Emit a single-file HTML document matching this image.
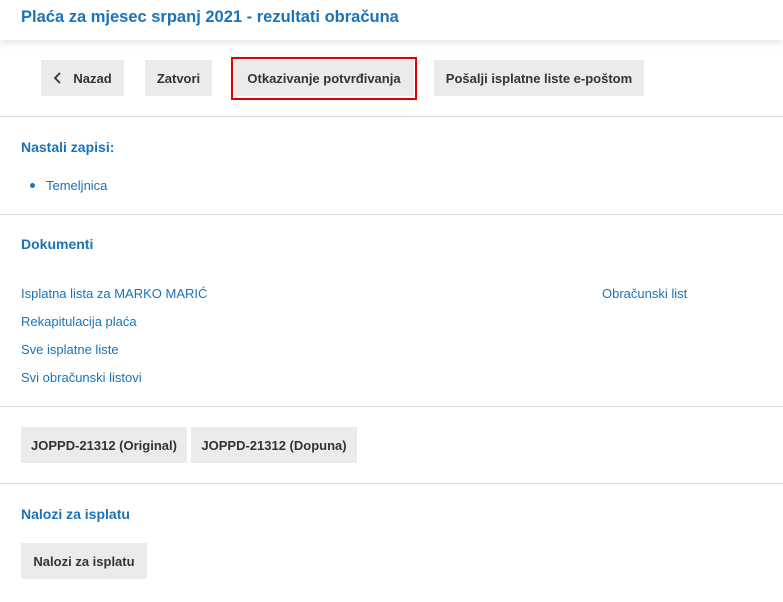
<!DOCTYPE html>
<html><head><meta charset="utf-8"><style>
*{margin:0;padding:0;box-sizing:border-box}
body{width:783px;height:602px;background:#fff;font-family:"Liberation Sans",sans-serif;position:relative;overflow:hidden;color:#333}
.hdr{position:absolute;left:0;top:0;width:783px;height:40px;background:#fff;box-shadow:0 2px 8px rgba(0,0,0,.12)}
.hdr h1{position:absolute;left:21px;top:8px;font-size:16.5px;font-weight:bold;color:#1a73b8}
.a{position:absolute}
.btn{position:absolute;height:36px;background:#ebebeb;font-size:13px;font-weight:bold;color:#333;line-height:37px;text-align:center}
.hr{position:absolute;left:0;width:783px;height:1px;background:#d4d4d4}
.h{position:absolute;left:21px;font-size:14px;font-weight:bold;color:#1a73b8}
.l{position:absolute;font-size:13px;color:#1a73b8}
</style></head><body>
<div class="hdr"><h1>Plaća za mjesec srpanj 2021 - rezultati obračuna</h1></div>
<div class="btn" style="left:41px;top:60px;width:83px;padding-left:20px">Nazad</div>
<svg class="a" style="left:53px;top:71px" width="10" height="14"><path d="M7 2 L2 7 L7 12" stroke="#333" stroke-width="1.8" fill="none"/></svg>
<div class="btn" style="left:145px;top:60px;width:67px">Zatvori</div>
<div class="a" style="left:231px;top:57px;width:186px;height:43px;border:2px solid #e30000"></div>
<div class="btn" style="left:234px;top:60px;width:180px">Otkazivanje potvrđivanja</div>
<div class="btn" style="left:434px;top:60px;width:210px">Pošalji isplatne liste e-poštom</div>
<div class="hr" style="top:116px"></div>
<div class="h" style="top:139px">Nastali zapisi:</div>
<div class="a" style="left:30px;top:183px;width:5px;height:5px;border-radius:50%;background:#1a73b8"></div>
<div class="l" style="left:46px;top:178px">Temeljnica</div>
<div class="hr" style="top:214px"></div>
<div class="h" style="top:236px">Dokumenti</div>
<div class="l" style="left:21px;top:286px">Isplatna lista za MARKO MARIĆ</div>
<div class="l" style="left:602px;top:286px">Obračunski list</div>
<div class="l" style="left:21px;top:314px">Rekapitulacija plaća</div>
<div class="l" style="left:21px;top:342px">Sve isplatne liste</div>
<div class="l" style="left:21px;top:370px">Svi obračunski listovi</div>
<div class="hr" style="top:406px"></div>
<div class="btn" style="left:21px;top:427px;width:166px">JOPPD-21312 (Original)</div>
<div class="btn" style="left:191px;top:427px;width:166px">JOPPD-21312 (Dopuna)</div>
<div class="hr" style="top:483px"></div>
<div class="h" style="top:506px">Nalozi za isplatu</div>
<div class="btn" style="left:21px;top:543px;width:126px">Nalozi za isplatu</div>
</body></html>
